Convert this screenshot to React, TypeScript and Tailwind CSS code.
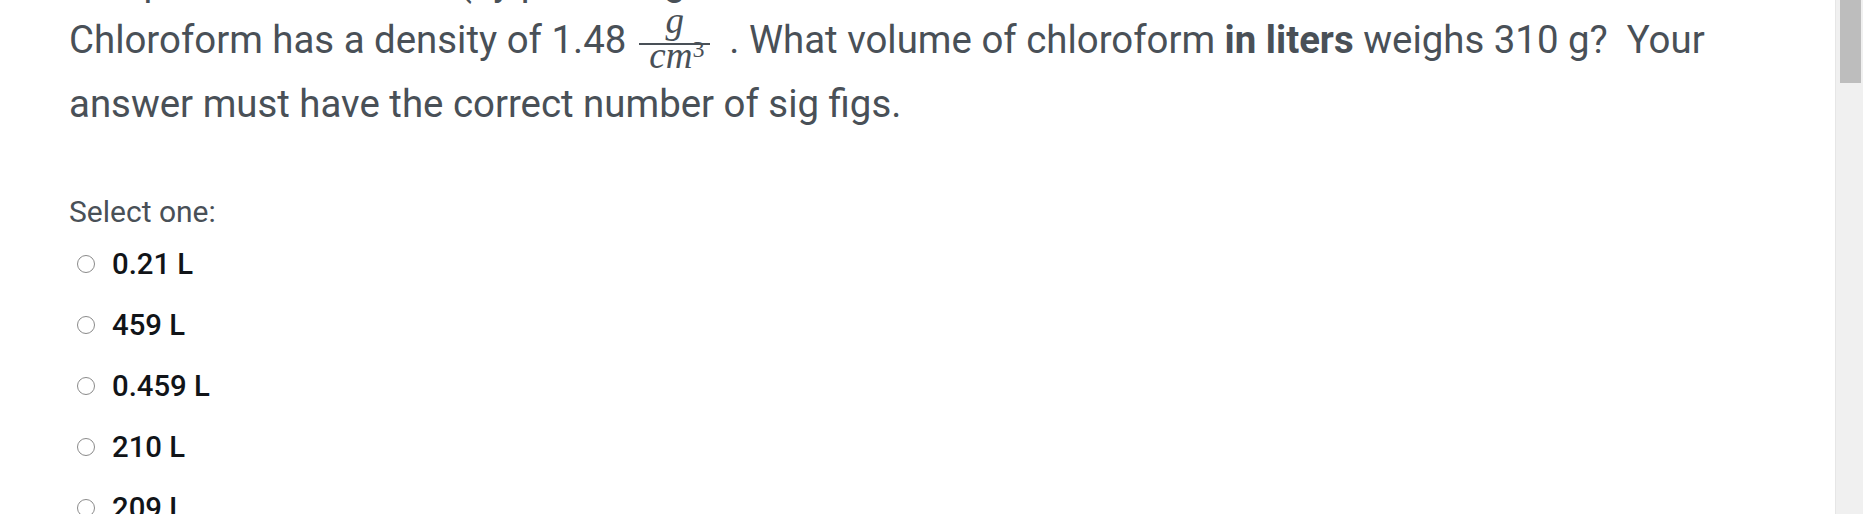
import React from 'react';

const OPTIONS = ['0.21 L', '459 L', '0.459 L', '210 L', '209 L'];

function Fraction() {
  return (
    <span className="inline-flex flex-col items-center w-[71px] align-[20px] -my-[20px] ml-[13px] mr-[19px] font-['Liberation_Serif',serif] italic text-[37px]">
      <span className="leading-[12px]">g</span>
      <span className="mt-[16px] h-[2px] w-full bg-[#495057]" />
      <span className="leading-[6px] pl-[4px] mt-[1px]">
        cm<span className="not-italic text-[24px] align-[11px]">3</span>
      </span>
    </span>
  );
}

export default function App() {
  return (
    <div className="flex w-[1863px] h-[514px] overflow-hidden bg-white font-['Roboto','Liberation_Sans',sans-serif]">
      <div className="flex-1 pl-[69px] pr-[60px] text-[#495057]">
        {/* line above, scrolled mostly out of view */}
        <div className="-mt-[44.5px] text-[38.4px] leading-[52px] whitespace-nowrap">
          Use pure math in each (by parts of g.
        </div>

        <div className="text-[38.4px] leading-[64px]">
          Chloroform has a density of 1.48<Fraction />. What volume of chloroform{' '}
          <span className="font-bold">in liters</span> weighs 310 g?&nbsp; Your answer must have the
          correct number of sig figs.
        </div>

        <div className="mt-[53px] text-[30px] leading-[45px]">Select one:</div>

        <div className="mt-[8.5px] flex flex-col gap-[17px]">
          {OPTIONS.map(o => (
            <div key={o} className="flex items-center h-[44px] pl-[8px]">
              <span className="w-[18px] h-[18px] rounded-full border border-[#8a8a8a] bg-white shrink-0" />
              <span className="ml-[17px] text-[29.3px] leading-[44px] font-medium text-[#111418]">{o}</span>
            </div>
          ))}
        </div>
      </div>

      {/* scrollbar */}
      <div className="w-[28px] h-full bg-[#f0f0f0] border-l border-[#e6e6e6] pl-[4px] pr-[2px]">
        <div className="h-[83px] w-full bg-[#bdbdbd]" />
      </div>
    </div>
  );
}
